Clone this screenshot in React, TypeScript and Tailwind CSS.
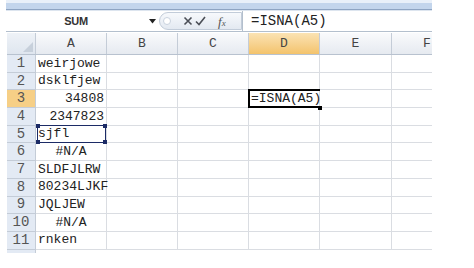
import React from "react";

type Cell = { text: string; align: "left" | "right" | "center" };

const rows: Cell[] = [
  { text: "weirjowe", align: "left" },
  { text: "dsklfjew", align: "left" },
  { text: "34808", align: "right" },
  { text: "2347823", align: "right" },
  { text: "sjfl", align: "left" },
  { text: "#N/A", align: "center" },
  { text: "SLDFJLRW", align: "left" },
  { text: "80234LJKF", align: "left" },
  { text: "JQLJEW", align: "left" },
  { text: "#N/A", align: "center" },
  { text: "rnken", align: "left" },
];

const cols = [
  { l: "A", w: "w-[71px]" },
  { l: "B", w: "w-[71px]" },
  { l: "C", w: "w-[71px]" },
  { l: "D", w: "w-[71px]" },
  { l: "E", w: "w-[72px]" },
  { l: "F", w: "w-[71px]" },
];

const mono = "font-['Liberation_Mono','DejaVu_Sans_Mono',monospace]";

function Handle({ pos }: { pos: string }) {
  return <span className={`absolute w-[4px] h-[4px] bg-[#1c2b66] ${pos}`} />;
}

export default function App() {
  return (
    <div className={`w-[474px] h-[268px] bg-white overflow-hidden text-[#222] ${mono}`}>
      <div className="ml-[6px] w-[426px]">
        {/* ribbon edge */}
        <div className="h-[3px] bg-[#e9f0f9]" />
        <div className="h-[6px] bg-[#c3d5ec]" />
        <div className="h-[1px] bg-[#8ea4c2]" />
        <div className="h-[1px] bg-[#dde5ef]" />

        {/* formula bar */}
        <div className="h-[21px] flex items-center bg-white border-b border-[#b3bfcd]">
          <div className="w-[140px] flex justify-center text-[11px] font-bold text-[#333] font-['Liberation_Sans',sans-serif] tracking-tight">
            SUM
          </div>
          <div className="w-[12px] flex justify-center">
            <svg width="7" height="5" viewBox="0 0 7 5">
              <path d="M0 0 L7 0 L3.5 4.5 Z" fill="#222" />
            </svg>
          </div>
          <div className="ml-[1px] w-[83px] h-[18px] rounded-l-full border border-[#c2ccd9] bg-gradient-to-b from-[#f7f9fc] to-[#e3e9f1] flex items-center">
            <span className="ml-[3px] w-[8px] h-[8px] rounded-full border border-[#c9d2de] bg-white" />
            <svg className="ml-[12px]" width="10" height="10" viewBox="0 0 10 10">
              <path d="M1.5 1.5 L8.5 8.5 M8.5 1.5 L1.5 8.5" stroke="#4b4f57" strokeWidth="1.6" />
            </svg>
            <svg className="ml-[2px]" width="11" height="10" viewBox="0 0 11 10">
              <path d="M1 5.5 L4 8.5 L10 1" stroke="#4b4f57" strokeWidth="1.6" fill="none" />
            </svg>
            <span className="ml-[12px] text-[13px] italic text-[#555] font-['Liberation_Serif',serif] leading-none">
              f<span className="text-[9px]">x</span>
            </span>
          </div>
          <div className="h-[21px] flex-1 border-l border-[#b3bfcd] flex items-center pl-[8px] text-[14px] text-[#222]">
            =ISNA(A5)
          </div>
        </div>
        <div className="h-[1px] bg-white" />

        {/* grid */}
        <div className="ml-[1px] w-[425px] overflow-hidden">
          {/* column header */}
          <div className="flex h-[22px] border-b border-[#b8c2cf]">
            <div className="w-[29px] shrink-0 border-r border-[#c4ccd7] bg-gradient-to-b from-[#eef2f7] to-[#dfe6ef] relative">
              <svg className="absolute right-[2px] bottom-[2px]" width="10" height="10" viewBox="0 0 10 10">
                <path d="M10 0 L10 10 L0 10 Z" fill="#c7d0db" />
              </svg>
            </div>
            {cols.map((c) => (
              <div
                key={c.l}
                className={`${c.w} shrink-0 border-r border-[#c4ccd7] flex items-center justify-center text-[13px] text-[#444] ${
                  c.l === "D"
                    ? "bg-gradient-to-b from-[#fbe3b3] to-[#f3c36c]"
                    : "bg-gradient-to-b from-[#f9fafc] to-[#e6eaf0]"
                }`}
              >
                {c.l}
              </div>
            ))}
          </div>

          {rows.map((r, i) => (
            <div key={i} className="flex h-[17.7px]">
              <div
                className={`w-[29px] shrink-0 border-r border-b border-[#c4ccd7] flex items-center justify-center text-[14px] text-[#555] ${
                  i === 2 ? "bg-[#f6cf86]" : "bg-[#e3eaf4]"
                }`}
              >
                {i + 1}
              </div>
              {cols.map((c, j) => (
                <div key={c.l} className={`${c.w} shrink-0 border-r border-b border-[#dadde2] relative`}>
                  {j === 0 && (
                    <div
                      className={`absolute inset-0 flex items-center whitespace-nowrap text-[13px] ${
                        r.align === "left"
                          ? "justify-start pl-[2px]"
                          : r.align === "right"
                          ? "justify-end pr-[2px]"
                          : "justify-center"
                      }`}
                    >
                      {r.text}
                    </div>
                  )}
                  {j === 0 && i === 4 && (
                    <div className="absolute left-[1px] top-[-1px] right-[0px] bottom-[-1px] border border-[#1c2b66] z-10">
                      <Handle pos="left-[-2px] top-[-2px]" />
                      <Handle pos="right-[-2px] top-[-2px]" />
                      <Handle pos="left-[-2px] bottom-[-2px]" />
                      <Handle pos="right-[-2px] bottom-[-2px]" />
                    </div>
                  )}
                  {j === 3 && i === 2 && (
                    <div className="absolute left-[-1px] top-[-1px] right-[-1px] bottom-[-1px] border-l-2 border-t-2 border-b-2 border-black z-10 flex items-center whitespace-nowrap text-[13px] pl-[1px]">
                      =ISNA(A5)
                      <span className="absolute right-[-2px] bottom-[-4px] w-[4px] h-[4px] bg-black" />
                    </div>
                  )}
                </div>
              ))}
            </div>
          ))}
          <div className="flex h-[3px]">
            <div className="w-[29px] shrink-0 bg-[#e3eaf4] border-r border-[#c4ccd7]" />
          </div>
        </div>
      </div>
    </div>
  );
}
